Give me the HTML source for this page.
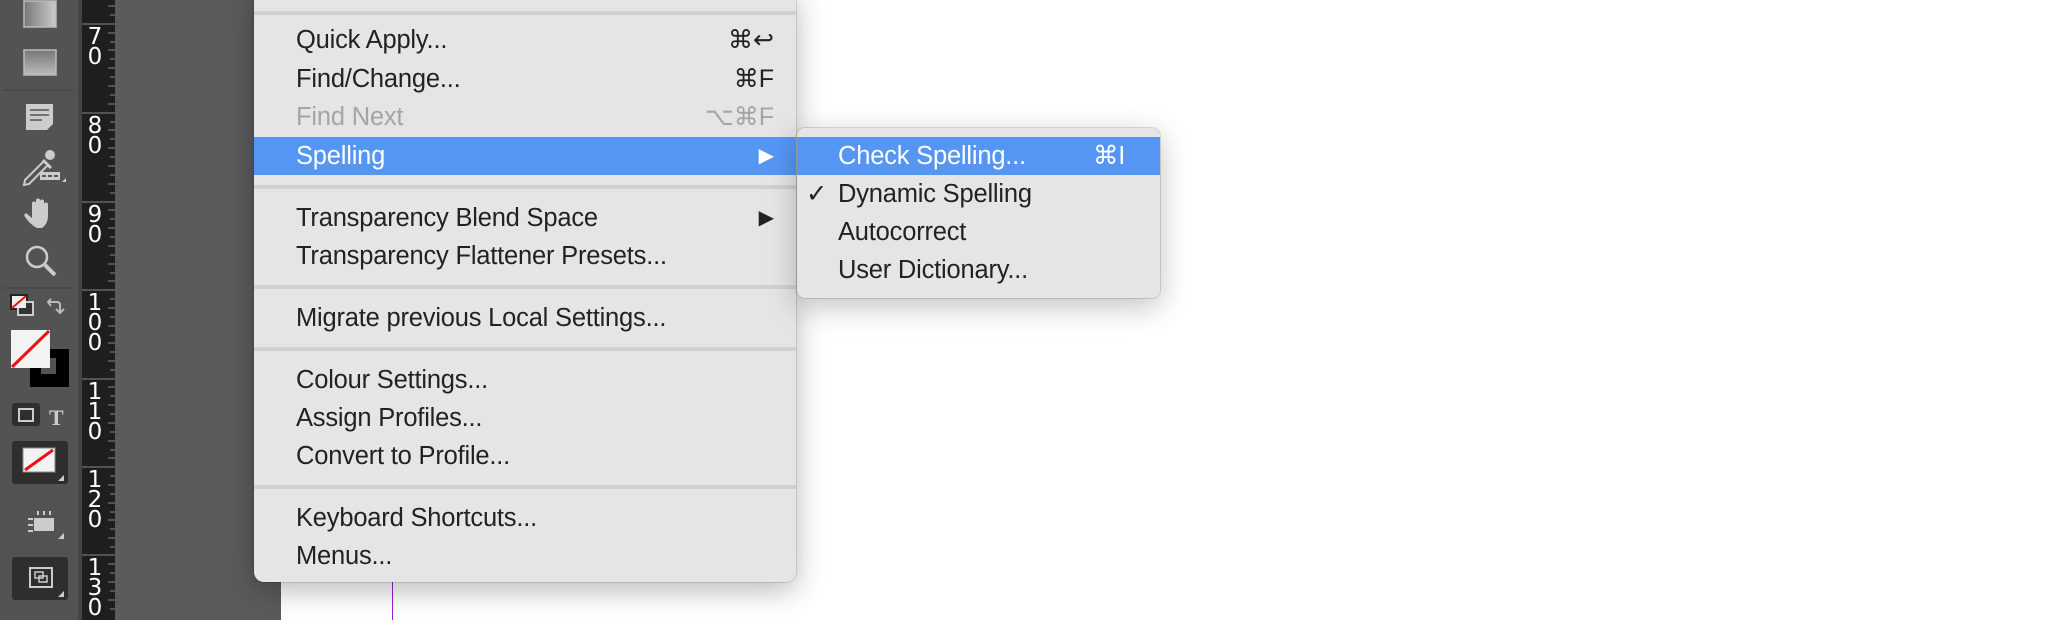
<!DOCTYPE html>
<html><head><meta charset="utf-8"><style>
*{margin:0;padding:0;box-sizing:border-box}
body{width:2048px;height:620px;overflow:hidden;background:#fff;position:relative;font-family:"Liberation Sans",sans-serif}
.a{position:absolute}
.menu{left:254px;top:-10px;width:542px;height:592px;background:#e6e5e6;border-radius:0 0 10px 10px;box-shadow:0 8px 30px rgba(0,0,0,.28),0 0 0 1px rgba(0,0,0,.12)}
.it{position:absolute;left:42px;font-size:25.5px;color:#222;line-height:38px;height:38px;white-space:nowrap;letter-spacing:-.2px}
.sc{position:absolute;right:22px;font-size:25px;color:#222;line-height:38px}
.sep{position:absolute;left:0;right:0;height:4px;background:#d2d1d2}
.hl{position:absolute;left:0;right:0;background:#5596f5;height:38px}
.sub{left:797px;top:128px;width:363px;height:170px;background:#e6e5e6;border-radius:8px;box-shadow:0 8px 30px rgba(0,0,0,.25),0 0 0 1px rgba(0,0,0,.12)}
.si{position:absolute;left:41px;font-size:25.5px;color:#222;line-height:38px;white-space:nowrap;letter-spacing:-.2px}
.n{position:absolute;left:84px;width:22px;color:#fff;font-size:23px;line-height:20px;text-align:center;font-family:"DejaVu Sans",sans-serif}
</style></head><body>
<div class="a" style="left:0;top:0;width:78px;height:620px;background:#535353"></div>
<div class="a" style="left:78px;top:0;width:4px;height:620px;background:#444"></div>
<div class="a" style="left:82px;top:0;width:33px;height:620px;background:#1e1e1e"></div>
<div class="a" style="left:115px;top:0;width:166px;height:620px;background:#5b5b5b"></div>
<svg class="a" style="left:82px;top:0" width="33" height="620">
<g stroke="#888" stroke-width="1">
<line x1="0" y1="24" x2="33" y2="24"/><line x1="0" y1="113" x2="33" y2="113"/><line x1="0" y1="202" x2="33" y2="202"/><line x1="0" y1="290" x2="33" y2="290"/><line x1="0" y1="379" x2="33" y2="379"/><line x1="0" y1="467" x2="33" y2="467"/><line x1="0" y1="555" x2="33" y2="555"/>
</g>
<path d="M26 6h7M28 15h5M26 33h7M28 42h5M26 50h7M28 59h5M26 68h7M28 77h5M26 86h7M28 95h5M26 104h7M28 122h5M26 130h7M28 139h5M26 148h7M28 157h5M26 166h7M28 175h5M26 184h7M28 193h5M26 210h7M28 219h5M26 228h7M28 237h5M26 246h7M28 255h5M26 264h7M28 273h5M26 281h7M28 299h5M26 308h7M28 317h5M26 326h7M28 335h5M26 343h7M28 352h5M26 361h7M28 370h5M26 387h7M28 396h5M26 405h7M28 414h5M26 423h7M28 432h5M26 441h7M28 450h5M26 458h7M28 476h5M26 485h7M28 494h5M26 503h7M28 512h5M26 520h7M28 529h5M26 538h7M28 547h5M26 564h7M28 573h5M26 582h7M28 591h5M26 600h7M28 609h5" stroke="#888"/>
</svg>
<div class="n" style="top:27px">7<br>0</div>
<div class="n" style="top:116px">8<br>0</div>
<div class="n" style="top:205px">9<br>0</div>
<div class="n" style="top:293px">1<br>0<br>0</div>
<div class="n" style="top:382px">1<br>1<br>0</div>
<div class="n" style="top:470px">1<br>2<br>0</div>
<div class="n" style="top:558px">1<br>3<br>0</div>
<svg class="a" style="left:0;top:0" width="78" height="620">
<defs><linearGradient id="g" x1="0" x2="1"><stop offset="0" stop-color="#777"/><stop offset="1" stop-color="#ccc"/></linearGradient>
<linearGradient id="g2" x1="0" y1="0" x2="0" y2="1"><stop offset="0" stop-color="#777"/><stop offset="1" stop-color="#bbb"/></linearGradient></defs>
<rect x="24" y="1" width="32" height="26" fill="url(#g)" stroke="#bbb" stroke-width="1.5"/>
<rect x="24" y="50" width="32" height="25" fill="url(#g2)" stroke="#bbb" stroke-width="1.5"/>
<line x1="4" y1="90" x2="74" y2="90" stroke="#484848" stroke-width="1.5"/>
<path d="M26 104h27v20l-6 6h-21z" fill="#ccc"/><path d="M30 110h19M30 115h19M30 120h12" stroke="#555" stroke-width="1.6"/>
<path d="M50 128l-4 6" stroke="#555"/>
<path d="M25 180l19-19 4 4-19 19-5 1z" fill="none" stroke="#ccc" stroke-width="2"/><circle cx="50" cy="155" r="5" fill="#ccc"/><path d="M43 160l8 8" stroke="#ccc" stroke-width="3"/>
<rect x="40" y="172" width="20" height="8" fill="#ccc"/><path d="M42 176h16" stroke="#555" stroke-dasharray="4 2" stroke-width="2"/>
<path d="M62 182l4-4v4z" fill="#ccc"/>
<path d="M37 228c-6-3-11-9-13-13l2-2 6 5v-15c0-2 4-2 4 0v8-11c0-2 4-2 4 0v11-10c0-2 4-2 4 0v10-7c0-2 4-2 4 0v12c0 6-3 10-6 12z" fill="#ccc"/>
<circle cx="37" cy="257" r="10" fill="none" stroke="#ccc" stroke-width="2.5"/><line x1="45" y1="265" x2="55" y2="275" stroke="#ccc" stroke-width="4"/>
<line x1="4" y1="288" x2="74" y2="288" stroke="#484848" stroke-width="1.5"/>
<rect x="11" y="295" width="16" height="14" fill="#eee" stroke="#222" stroke-width="2"/><rect x="18" y="302" width="15" height="13" fill="#333" stroke="#ccc" stroke-width="2"/><rect x="12" y="296" width="14" height="12" fill="#eee"/><line x1="12" y1="308" x2="26" y2="296" stroke="#e11" stroke-width="2"/>
<path d="M51 306l-3-4 3-3M48 302h9c2 0 3 1 3 3v7M56 309l4 4 4-4" fill="none" stroke="#bbb" stroke-width="2"/>
<rect x="30" y="349" width="39" height="38" fill="#000"/><rect x="41" y="358" width="15" height="16" fill="#535353"/>
<rect x="11" y="330" width="39" height="38" fill="#f3f3f3"/><line x1="12" y1="367" x2="49" y2="331" stroke="#e11" stroke-width="3"/>
<rect x="12" y="403" width="28" height="23" rx="3" fill="#2e2e2e"/><rect x="19" y="409" width="14" height="12" fill="none" stroke="#ccc" stroke-width="2"/>
<text x="49" y="425" fill="#ccc" font-family="Liberation Serif" font-weight="bold" font-size="22">T</text>
<rect x="12" y="441" width="56" height="43" rx="3" fill="#2e2e2e"/><rect x="23" y="448" width="32" height="24" fill="#f3f3f3" stroke="#888"/><line x1="25" y1="470" x2="53" y2="450" stroke="#e11" stroke-width="3"/>
<path d="M58 481l6-6v6z" fill="#ccc"/>
<rect x="34" y="518" width="20" height="13" fill="#ccc"/><path d="M28 519h5M28 525h5M28 531h5M38 511v4M44 511v4M50 511v4" stroke="#ccc" stroke-width="2"/>
<path d="M58 539l6-6v6z" fill="#ccc"/>
<rect x="12" y="557" width="56" height="43" rx="3" fill="#2e2e2e"/><rect x="30" y="568" width="22" height="19" fill="none" stroke="#ccc" stroke-width="2"/><rect x="35" y="572" width="8" height="6" fill="none" stroke="#ccc" stroke-width="1.5"/><rect x="39" y="576" width="8" height="6" fill="none" stroke="#ccc" stroke-width="1.5"/>
<path d="M58 597l6-6v6z" fill="#ccc"/>
</svg>
<div class="a" style="left:392px;top:582px;width:1px;height:38px;background:#a020d0"></div>
<div class="a menu">
<div class="sep" style="top:21px"></div>
<div class="it" style="top:31px">Quick Apply...</div><div class="sc" style="top:31px">⌘↩</div>
<div class="it" style="top:70px">Find/Change...</div><div class="sc" style="top:70px">⌘F</div>
<div class="it" style="top:108px;color:#a5a5a5">Find Next</div><div class="sc" style="top:108px;color:#a5a5a5">⌥⌘F</div>
<div class="hl" style="top:147px"></div>
<div class="it" style="top:147px;color:#fff">Spelling</div><div class="sc" style="top:147px;color:#fff;font-size:20px">▶</div>
<div class="sep" style="top:195px"></div>
<div class="it" style="top:209px">Transparency Blend Space</div><div class="sc" style="top:209px;font-size:20px">▶</div>
<div class="it" style="top:247px">Transparency Flattener Presets...</div>
<div class="sep" style="top:295px"></div>
<div class="it" style="top:309px">Migrate previous Local Settings...</div>
<div class="sep" style="top:357px"></div>
<div class="it" style="top:371px">Colour Settings...</div>
<div class="it" style="top:409px">Assign Profiles...</div>
<div class="it" style="top:447px">Convert to Profile...</div>
<div class="sep" style="top:495px"></div>
<div class="it" style="top:509px">Keyboard Shortcuts...</div>
<div class="it" style="top:547px">Menus...</div>
</div>
<div class="a sub">
<div class="hl" style="top:9px"></div>
<div class="si" style="top:9px;color:#fff">Check Spelling...</div>
<div class="si" style="top:9px;left:296px;color:#fff">⌘I</div>
<div class="si" style="top:47px;left:9px">✓</div>
<div class="si" style="top:47px">Dynamic Spelling</div>
<div class="si" style="top:85px">Autocorrect</div>
<div class="si" style="top:123px">User Dictionary...</div>
</div>
</body></html>
